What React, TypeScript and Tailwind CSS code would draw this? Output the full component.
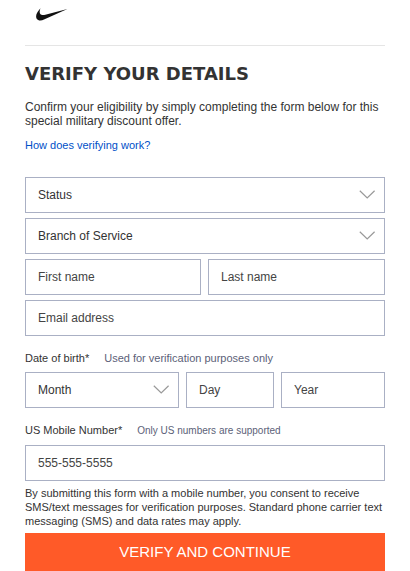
import * as React from 'react'

const fieldClass =
  'block h-9 w-full min-w-0 appearance-none rounded-none border border-[#aab0c4] bg-white px-3 text-[12px] text-[#333333] outline-none placeholder:text-[#444444] placeholder:opacity-100 focus:border-[#111111]'

interface TextFieldProps extends React.InputHTMLAttributes<HTMLInputElement> {
  label: string
}

const TextField: React.FC<TextFieldProps> = ({ label, type = 'text', ...props }) => {
  return <input type={type} aria-label={label} placeholder={label} className={fieldClass} {...props} />
}

interface SelectFieldProps {
  label: string
  name: string
  options: string[]
}

const SelectField: React.FC<SelectFieldProps> = ({ label, name, options }) => {
  return (
    <div className="relative">
      <select name={name} aria-label={label} defaultValue="" className={fieldClass}>
        <option value="" disabled>
          {label}
        </option>
        {options.map((option) => (
          <option key={option}>{option}</option>
        ))}
      </select>
      <svg
        aria-hidden="true"
        viewBox="0 0 16 9"
        className="pointer-events-none absolute top-[13px] right-[10px] h-[9px] w-4"
        fill="none"
        stroke="#999999"
        strokeWidth="1.2"
      >
        <path d="M.8.8 8.2 8 15.6.8" />
      </svg>
    </div>
  )
}

const Logo = () => (
  <svg
    role="img"
    aria-label="Nike"
    viewBox="0 0 32 13"
    className="ml-[11px] h-[13px] w-8"
    fill="#111111"
  >
    <path d="M31.4.9 8.6 11.3C6.4 12.3 4.6 12.7 3.2 12.4 1 12 .1 10.3.1 8.3.1 5.6 2.2 2.6 4.5.2 3.5 2.6 3.4 4.7 4.3 5.9 5.2 7 7 7.3 9.3 6.7Z" />
  </svg>
)

const statuses = ['Active Duty', 'Reservist or National Guard', 'Veteran or Retiree', 'Military Family']

const branches = ['Air Force', 'Army', 'Coast Guard', 'Marine Corps', 'Navy', 'Space Force']

const months = [
  'January',
  'February',
  'March',
  'April',
  'May',
  'June',
  'July',
  'August',
  'September',
  'October',
  'November',
  'December',
]

const App: React.FC = () => {
  return (
    <main className="bg-white px-[25px] font-['Liberation_Sans',Arial,sans-serif] text-[12px]/[14px] text-[#333333]">
      <header className="border-b border-[#e5e5e5] pt-2 pb-6">
        <Logo />
      </header>

      <h1 className="mt-4 font-['DejaVu_Sans',Verdana,sans-serif] text-[18px]/6 font-bold">
        VERIFY YOUR DETAILS
      </h1>
      <p className="mt-[14px]">
        Confirm your eligibility by simply completing the form below for this special military
        discount offer.
      </p>
      <a href="#how" className="mt-[10px] inline-block text-[11px]/[14px] text-[#0050c8]">
        How does verifying work?
      </a>

      <form className="mt-[25px]" onSubmit={(e) => e.preventDefault()}>
        <div className="flex flex-col gap-[5px]">
          <SelectField label="Status" name="status" options={statuses} />
          <SelectField label="Branch of Service" name="branch" options={branches} />
          <div className="grid grid-cols-[176fr_177fr] gap-[7px]">
            <TextField label="First name" name="firstName" />
            <TextField label="Last name" name="lastName" />
          </div>
          <TextField label="Email address" name="email" type="email" />
        </div>

        <fieldset className="mt-[15px]" aria-describedby="dob-hint">
          <legend className="text-[11px]/[14px]">
            Date of birth*
            <span id="dob-hint" className="ml-[15px] text-[#5c5f78]">
              Used for verification purposes only
            </span>
          </legend>
          <div className="mt-[7px] grid grid-cols-[154fr_88fr_104fr] gap-[7px]">
            <SelectField label="Month" name="month" options={months} />
            <TextField label="Day" name="day" inputMode="numeric" />
            <TextField label="Year" name="year" inputMode="numeric" />
          </div>
        </fieldset>

        <div className="mt-[15px] flex items-baseline gap-[15px] text-[11px]/[14px]">
          <label htmlFor="mobile">US Mobile Number*</label>
          <span id="mobile-hint" className="text-[10px] text-[#5c5f78]">
            Only US numbers are supported
          </span>
        </div>
        <div className="mt-[7px]">
          <input
            id="mobile"
            name="mobile"
            type="tel"
            aria-describedby="mobile-hint"
            placeholder="555-555-5555"
            className={fieldClass}
          />
        </div>

        <p className="mt-[5px] text-[11px]/[14px]">
          By submitting this form with a mobile number, you consent to receive SMS/text messages for
          verification purposes. Standard phone carrier text messaging (SMS) and data rates may
          apply.
        </p>
        <button type="submit" className="mt-[5px] block h-[38px] w-full bg-[#ff5a28] text-[15px] text-white">
          VERIFY AND CONTINUE
        </button>
      </form>
    </main>
  )
}

export default App
